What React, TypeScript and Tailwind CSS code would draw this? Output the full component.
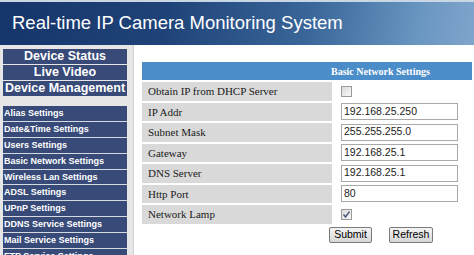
import React from "react";

const bigItems = ["Device Status", "Live Video", "Device Management"];
const smallItems = [
  "Alias Settings",
  "Date&Time Settings",
  "Users Settings",
  "Basic Network Settings",
  "Wireless Lan Settings",
  "ADSL Settings",
  "UPnP Settings",
  "DDNS Service Settings",
  "Mail Service Settings",
  "FTP Service Settings",
];

type Row = { label: string; kind: "check" | "text"; value?: string; checked?: boolean };
const rows: Row[] = [
  { label: "Obtain IP from DHCP Server", kind: "check", checked: false },
  { label: "IP Addr", kind: "text", value: "192.168.25.250" },
  { label: "Subnet Mask", kind: "text", value: "255.255.255.0" },
  { label: "Gateway", kind: "text", value: "192.168.25.1" },
  { label: "DNS Server", kind: "text", value: "192.168.25.1" },
  { label: "Http Port", kind: "text", value: "80" },
  { label: "Network Lamp", kind: "check", checked: true },
];

function Check({ checked }: { checked?: boolean }) {
  return (
    <span className="flex h-[11px] w-[11px] items-center justify-center border border-[#9a9a9a] bg-[linear-gradient(135deg,#dcdcdc,#f8f8f8)]">
      {checked && (
        <svg width="9" height="9" viewBox="0 0 9 9">
          <path d="M1.5 4.5 L3.5 7 L7.5 1.5" fill="none" stroke="#4a5a78" strokeWidth="1.4" />
        </svg>
      )}
    </span>
  );
}

export default function App() {
  return (
    <div className="relative h-[255px] w-[474px] overflow-hidden bg-white font-['Liberation_Sans',Arial,sans-serif]">
      <div className="flex h-[45px] items-center border-t-2 border-[#c9d6e4] bg-[linear-gradient(100deg,#16356a_0%,#1f4378_35%,#3a6699_65%,#6a96c2_88%,#7fa5cb_100%)] pl-[12px]">
        <span className="text-[18.5px] leading-none text-white">Real-time IP Camera Monitoring System</span>
      </div>
      <div className="flex h-[210px]">
        <div className="flex w-[134px] shrink-0 flex-col border-r border-[#d2d2d2] bg-[#e6e6e6] pl-[3px] pr-[6px] pt-[4px]">
          <div className="flex flex-col gap-[1px]">
            {bigItems.map((t) => (
              <div
                key={t}
                className="flex h-[15px] items-center justify-center bg-[#374a78] text-[12.5px] font-bold leading-none text-white"
              >
                {t}
              </div>
            ))}
          </div>
          <div className="mt-[10px] flex flex-col gap-[1px] bg-[#d5d9e0]">
            {smallItems.map((t) => (
              <div
                key={t}
                className="flex h-[14.9px] shrink-0 items-center bg-[#374a78] pl-[1px] text-[9px] font-bold leading-none text-white"
              >
                {t}
              </div>
            ))}
          </div>
        </div>
        <div className="ml-[8px] mt-[17px] flex w-[330px] flex-col font-['Liberation_Serif','Times_New_Roman',serif]">
          <div className="flex h-[18px] bg-[#4b8dc8]">
            <div className="w-[189px]" />
            <div className="flex items-center text-[10px] font-bold text-white">Basic Network Settings</div>
          </div>
          <div className="flex flex-col gap-[2px] pt-[2px]">
            {rows.map((r) => (
              <div key={r.label} className="flex h-[18.5px]">
                <div className="flex w-[190px] items-center bg-[#d9d9d9] pl-[6px] text-[11px] text-[#1a1a1a]">
                  {r.label}
                </div>
                <div className="flex flex-1 items-center pl-[9px]">
                  {r.kind === "check" ? (
                    <Check checked={r.checked} />
                  ) : (
                    <div className="flex h-[17px] w-[117px] items-center border border-[#a9a9a9] bg-white pl-[2px] font-['Liberation_Sans',Arial,sans-serif] text-[10.5px] text-[#222]">
                      {r.value}
                    </div>
                  )}
                </div>
              </div>
            ))}
          </div>
          <div className="mt-[3px] flex pl-[187px] font-['Liberation_Sans',Arial,sans-serif]">
            <div className="flex h-[16px] w-[43px] items-center justify-center rounded-[2px] border border-[#7a7a7a] bg-[linear-gradient(#f4f4f4,#d6d6d6)] text-[10.5px] text-black">
              Submit
            </div>
            <div className="ml-[17px] flex h-[16px] w-[44px] items-center justify-center rounded-[2px] border border-[#7a7a7a] bg-[linear-gradient(#f4f4f4,#d6d6d6)] text-[10.5px] text-black">
              Refresh
            </div>
          </div>
        </div>
      </div>
    </div>
  );
}
